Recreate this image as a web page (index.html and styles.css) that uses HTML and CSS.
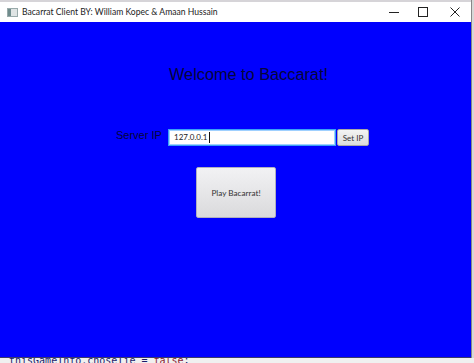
FILE: index.html
```html
<!DOCTYPE html>
<html>
<head>
<meta charset="utf-8">
<link rel="stylesheet" href="styles.css">
</head>
<body>
<div class="screen">
  <div class="top-row">
    <div class="window">
      <div class="titlebar">
        <div class="app-icon"><span class="icon-left"></span><span class="icon-right"></span></div>
        <div class="title">Bacarrat Client BY: William Kopec &amp; Amaan Hussain</div>
        <div class="controls">
          <svg class="ctl min" width="10" height="10" viewBox="0 0 10 10"><path d="M0 5.5h10" stroke="#222" stroke-width="1"/></svg>
          <svg class="ctl max" width="10" height="10" viewBox="0 0 10 10"><rect x="0.5" y="0.5" width="9" height="9" fill="none" stroke="#222" stroke-width="1"/></svg>
          <svg class="ctl close" width="10" height="10" viewBox="0 0 10 10"><path d="M0.5 0.5l9 9M9.5 0.5l-9 9" stroke="#222" stroke-width="1"/></svg>
        </div>
      </div>
      <div class="content">
        <h1 class="welcome">Welcome to Baccarat!</h1>
        <div class="ip-row">
          <label class="ip-label">Server IP</label>
          <div class="ip-input">127.0.0.1<span class="caret"></span></div>
          <button class="set-btn">Set IP</button>
        </div>
        <button class="play-btn">Play Bacarrat!</button>
      </div>
    </div>
    <div class="edge"></div>
  </div>
  <div class="code-strip"><span class="code">thisGameInfo.choseTie = <span class="kw">false</span>;</span></div>
</div>
</body>
</html>
```
FILE: styles.css
```css
html, body {
  margin: 0;
  padding: 0;
  width: 474px;
  height: 363px;
  overflow: hidden;
  background: #ececec;
}
.screen {
  display: flex;
  flex-direction: column;
  width: 474px;
  height: 363px;
}
.top-row {
  display: flex;
  height: 358px;
}
.window {
  width: 471px;
  display: flex;
  flex-direction: column;
  border-bottom: 1px solid #3a3a6a;
  box-sizing: border-box;
}
.edge {
  width: 3px;
  background: #d8d8d8;
  border-left: 1px solid #888;
  box-sizing: border-box;
}
.titlebar {
  height: 22px;
  background: #fff;
  display: flex;
  align-items: center;
  border-top: 2px solid #d6d4d8;
  box-sizing: border-box;
}
.app-icon {
  width: 9px;
  height: 7px;
  margin-left: 7px;
  display: flex;
  border: 1px solid #9aa;
  background: #dfe4e4;
}
.icon-left { width: 3px; background: #6f8c8c; }
.icon-right { flex: 1; }
.title {
  margin-left: 4px;
  font-family: Lato, "Open Sans", sans-serif;
  font-size: 8.6px;
  color: #222;
  flex: 1;
  white-space: nowrap;
}
.controls {
  display: flex;
  align-items: center;
  margin-right: 11px;
}
.ctl { display: block; }
.max { margin-left: 19px; }
.close { margin-left: 22px; }
.content {
  flex: 1;
  background: #0000fe;
  padding-top: 43px;
  box-sizing: border-box;
}
.welcome {
  margin: 0 0 0 169px;
  font-family: "Liberation Sans", Arial, sans-serif;
  font-weight: normal;
  font-size: 16.3px;
  line-height: 19px;
  color: #06063a;
}
.ip-row {
  display: flex;
  align-items: center;
  margin-top: 44px;
  padding-left: 116px;
}
.ip-label {
  font-family: "Liberation Sans", Arial, sans-serif;
  font-size: 11px;
  color: #06063a;
  width: 52px;
  white-space: nowrap;
  margin-top: -4px;
}
.ip-input {
  width: 168px;
  height: 17px;
  box-sizing: border-box;
  background: #fff;
  border: 1px solid #39a0f5;
  box-shadow: inset 0 0 0 1px #9fd0ff;
  font-family: Lato, "Open Sans", sans-serif;
  font-size: 8px;
  line-height: 15px;
  padding-left: 5px;
  color: #222;
  display: flex;
  align-items: center;
}
.caret {
  display: inline-block;
  width: 1px;
  height: 11px;
  background: #111;
  margin-left: 1px;
}
.set-btn {
  margin-left: 1px;
  width: 32px;
  height: 17px;
  padding: 0;
  border: 1px solid #a8a8a8;
  border-radius: 2px;
  background: linear-gradient(#f4f4f4, #dcdcdc);
  font-family: Lato, "Open Sans", sans-serif;
  font-size: 8px;
  color: #333;
  margin-top: 1px;
}
.play-btn {
  display: block;
  margin: 21px 0 0 196px;
  width: 80px;
  height: 51px;
  padding: 0;
  border: 1px solid #b0b0c0;
  border-radius: 2px;
  background: linear-gradient(#f2f2f4, #dadadc);
  font-family: Lato, "Open Sans", sans-serif;
  font-size: 8.2px;
  color: #333;
}
.code-strip {
  flex: 1;
  background: #f0f0f0;
  overflow: hidden;
}
.code {
  display: block;
  margin-top: -3px;
  padding-left: 9px;
  font-family: "DejaVu Sans Mono", monospace;
  font-size: 10px;
  line-height: 12px;
  color: #1a1a6a;
  white-space: nowrap;
}
.kw { color: #8b2030; }
```
